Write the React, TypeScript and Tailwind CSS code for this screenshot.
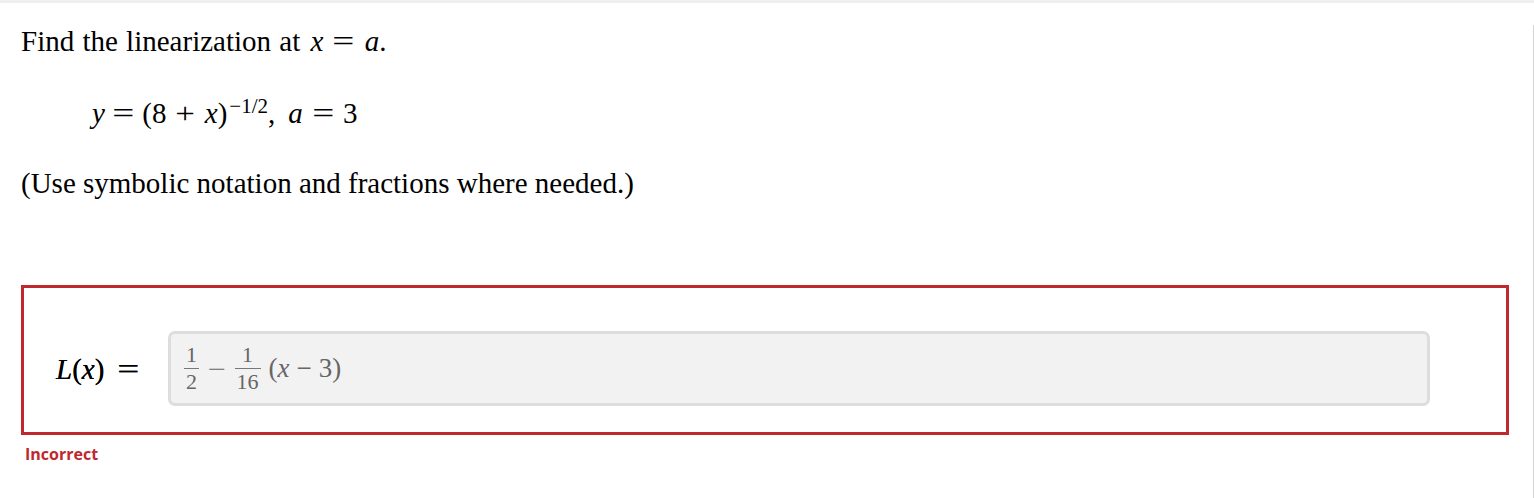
import React from 'react'

function Eq({ className = 'mx-[12px]' }: { className?: string }) {
  return <span className={`inline-block scale-x-[1.35] ${className}`}>=</span>
}

function Frac({ num, den }: { num: string; den: string }) {
  return (
    <span className="inline-flex flex-col items-center align-middle text-[22px] leading-none">
      <span className="px-[2px] pb-[2px]">{num}</span>
      <span className="self-stretch border-t border-[#777]" />
      <span className="px-[2px] pt-[2px]">{den}</span>
    </span>
  )
}

export default function App() {
  return (
    <div className="min-h-screen bg-white" style={{ fontFamily: '"Liberation Serif", serif' }}>
      <div className="h-[3px] bg-[#efefef]" />
      <div className="h-[495px] border-r border-[#d4d4d4] pl-[21px] pr-[24px] text-black">
        <p className="mt-[22px] text-[29px] leading-[32px] [word-spacing:1px]">
          Find the linearization at <i className="ml-[2px]">x</i>
          <Eq className="ml-[12px] mr-[13px]" />
          <i>a</i>.
        </p>

        <p className="mt-[40px] pl-[71px] text-[29px] leading-[32px]">
          <i>y</i>
          <Eq className="ml-[10px] mr-[11px]" />
          (8<span className="inline-block scale-x-[1.2] mx-[11px]">+</span>
          <i>x</i>)<sup className="text-[21px] ml-[2px]">−1/2</sup>,<span className="ml-[13px]" />
          <i>a</i>
          <Eq className="ml-[12px] mr-[12px]" />3
        </p>

        <p className="mt-[38px] text-[29px] leading-[32px]">
          (Use symbolic notation and fractions where needed.)
        </p>

        <div className="mt-[86px] border-[3px] border-[#c1272d] pl-[32px] pr-[76px] pt-[43px] pb-[26px] flex items-center">
          <div className="w-[112px] text-[29px] leading-[32px] [text-shadow:0_0_0.4px_#000]">
            <i>L</i>(<i>x</i>)<Eq className="ml-[16px]" />
          </div>
          <div className="flex-1 h-[75px] rounded-[7px] border-[3px] border-[#dddddd] bg-[#f2f2f2] flex items-center pl-[13px] text-[#666666]">
            <Frac num="1" den="2" />
            <span className="inline-block scale-x-[1.35] mx-[11px] text-[24px]">−</span>
            <Frac num="1" den="16" />
            <span className="ml-[8px] text-[27px] leading-none">
              (<i>x</i>
              <span className="mx-[7px]">−</span>3)
            </span>
          </div>
        </div>

        <div
          className="mt-[7px] ml-[4px] text-[16px] leading-[24px] font-bold text-[#c1272d]"
          style={{ fontFamily: '"Open Sans", sans-serif' }}
        >
          Incorrect
        </div>
      </div>
    </div>
  )
}
